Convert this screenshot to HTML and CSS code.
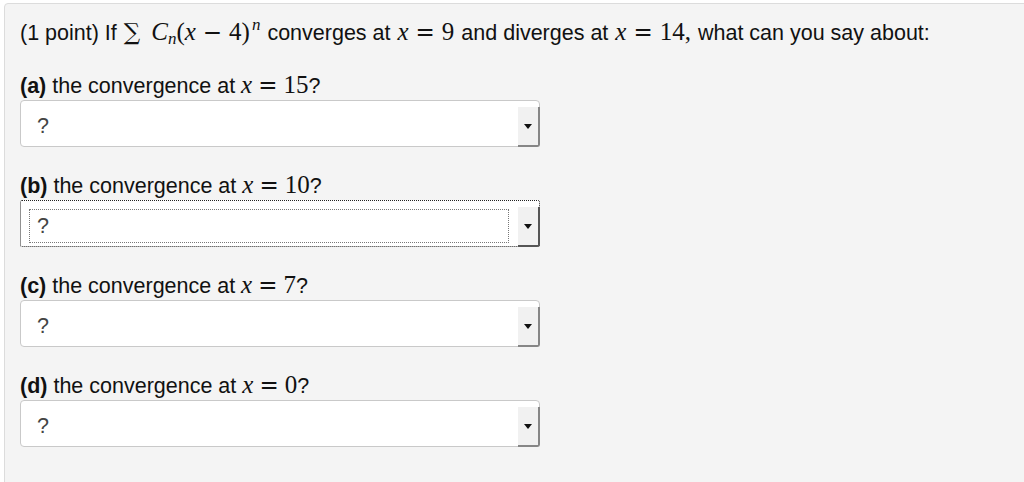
FILE: index.html
```html
<!DOCTYPE html>
<html lang="en">
<head>
<meta charset="utf-8">
<title>Convergence question</title>
<link rel="stylesheet" href="styles.css">
</head>
<body>
<div class="panel">
  <p class="header">(1 point) If <span class="math"><span class="sum">∑</span><span class="mi">C</span><sub class="mi">n</sub><span class="mn">(</span><span class="mi">x</span><span class="mo">−</span><span class="mn">4</span><span class="mn">)</span><sup class="mi">n</sup></span> converges at <span class="math"><span class="mi">x</span><span class="mo">=</span><span class="mn">9</span></span> and diverges at <span class="math"><span class="mi">x</span><span class="mo">=</span><span class="mn">14</span>,</span> what can you say about:</p>

  <div class="q">
    <p class="qlabel"><b>(a)</b> the convergence at <span class="math"><span class="mi">x</span><span class="mo">=</span><span class="mn">15</span></span>?</p>
    <div class="select"><span class="value">?</span><span class="btn"><span class="arrow"></span></span></div>
  </div>

  <div class="q">
    <p class="qlabel"><b>(b)</b> the convergence at <span class="math"><span class="mi">x</span><span class="mo">=</span><span class="mn">10</span></span>?</p>
    <div class="select focus"><span class="value">?</span><span class="btn"><span class="arrow"></span></span></div>
  </div>

  <div class="q">
    <p class="qlabel"><b>(c)</b> the convergence at <span class="math"><span class="mi">x</span><span class="mo">=</span><span class="mn">7</span></span>?</p>
    <div class="select"><span class="value">?</span><span class="btn"><span class="arrow"></span></span></div>
  </div>

  <div class="q">
    <p class="qlabel"><b>(d)</b> the convergence at <span class="math"><span class="mi">x</span><span class="mo">=</span><span class="mn">0</span></span>?</p>
    <div class="select"><span class="value">?</span><span class="btn"><span class="arrow"></span></span></div>
  </div>
</div>
</body>
</html>
```

FILE: styles.css
```css
html, body {
  margin: 0;
  padding: 0;
  overflow: hidden;
  background: #ffffff;
}

body {
  font-family: "Liberation Sans", Arial, Helvetica, sans-serif;
  font-size: 21.5px;
  color: #111111;
}

.panel {
  margin: 3px -20px 0 4px;
  border: 1px solid #dcdcdc;
  border-radius: 4px;
  background: #f4f4f4;
  padding: 16px 0 0 15px;
  min-height: 520px;
}

.header {
  margin: 0 0 27px;
  line-height: 26px;
  white-space: nowrap;
}

.q {
  margin-bottom: 26px;
}

.qlabel {
  margin: 0;
  line-height: 26px;
  white-space: nowrap;
}

.qlabel b {
  font-weight: bold;
}

.math {
  font-family: "Liberation Serif", "Times New Roman", serif;
  font-size: 25px;
  white-space: nowrap;
  line-height: 0;
}

.header .math {
  margin: 0 1px;
}

.mi {
  font-style: italic;
}

.mo {
  font-family: "DejaVu Sans", sans-serif;
  font-size: 23px;
  margin: 0 6px;
}

.header .mo {
  margin: 0 7px;
}

.sum {
  font-family: "DejaVu Serif", serif;
  font-size: 23px;
  margin-right: 11px;
}

.math sub {
  font-size: 17px;
  vertical-align: -4px;
  line-height: 0;
}

.math sup {
  font-size: 17px;
  vertical-align: 10px;
  line-height: 0;
  margin-left: 2px;
}

.select {
  margin-top: 1px;
  width: 520px;
  height: 47px;
  box-sizing: border-box;
  border: 1px solid #c9c9c9;
  border-radius: 4px;
  background: #ffffff;
  display: flex;
  align-items: stretch;
}

.value {
  flex: 1;
  display: flex;
  align-items: center;
  margin: 9px 10px 4px 9px;
  padding-left: 7px;
  color: #444444;
}

.btn {
  width: 20px;
  margin: 6px -1px -1px 0;
  background: #f1f1f1;
  border-right: 2px solid #868686;
  border-bottom: 2px solid #868686;
  border-bottom-right-radius: 3px;
  display: flex;
  align-items: center;
  justify-content: center;
}

.arrow {
  width: 0;
  height: 0;
  border-left: 4px solid transparent;
  border-right: 4px solid transparent;
  border-top: 5px solid #111111;
}

.select.focus {
  border: 1px dotted #222222;
  border-radius: 2px;
}

.select.focus .value {
  outline: 1px dotted #777777;
}

.select.focus .btn {
  border-right-color: #555555;
  border-bottom-color: #555555;
}
```
